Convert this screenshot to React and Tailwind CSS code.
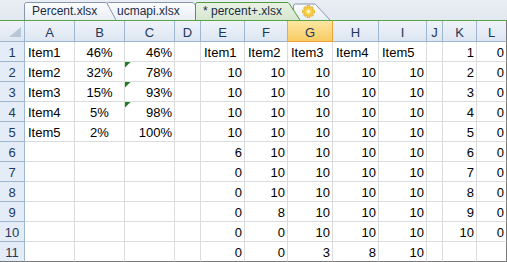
const data = [
  ["Item1", "46%", "46%", "", "Item1", "Item2", "Item3", "Item4", "Item5", "", "1", "0"],
  ["Item2", "32%", "78%", "", "10", "10", "10", "10", "10", "", "2", "0"],
  ["Item3", "15%", "93%", "", "10", "10", "10", "10", "10", "", "3", "0"],
  ["Item4", "5%", "98%", "", "10", "10", "10", "10", "10", "", "4", "0"],
  ["Item5", "2%", "100%", "", "10", "10", "10", "10", "10", "", "5", "0"],
  ["", "", "", "", "6", "10", "10", "10", "10", "", "6", "0"],
  ["", "", "", "", "0", "10", "10", "10", "10", "", "7", "0"],
  ["", "", "", "", "0", "10", "10", "10", "10", "", "8", "0"],
  ["", "", "", "", "0", "8", "10", "10", "10", "", "9", "0"],
  ["", "", "", "", "0", "0", "10", "10", "10", "", "10", "0"],
  ["", "", "", "", "0", "0", "3", "8", "10", "", "", ""],
];

const letters = ["A", "B", "C", "D", "E", "F", "G", "H", "I", "J", "K", "L"];
const gridCols =
  "grid grid-cols-[25px_50px_50px_50px_26px_44px_43px_45px_46px_48px_16px_34px_1fr]";

function Tab({ id, width, flat, top = 2.5, active, children, className, textClass }) {
  const fill = active ? ["#eaf2e6", "#d6e6cf"] : ["#fbfcfe", "#e9eef5"];
  const stroke = active ? "#4f9a3a" : "#8796ab";
  const outline = `M0.5 20 V${top + 2} Q0.5 ${top} 2.5 ${top} H${flat} Q${flat + 1.5} ${top} ${flat + 2.3} ${top + 1.3} L${width} 20`;
  return (
    <div className={className}>
      <svg className="absolute inset-0" width={width} height="20">
        <defs>
          <linearGradient id={id} x1="0" y1="0" x2="0" y2="1">
            <stop offset="0" stopColor={fill[0]} />
            <stop offset="1" stopColor={fill[1]} />
          </linearGradient>
        </defs>
        <path d={outline + " Z"} fill={`url(#${id})`} />
        <path d={outline} fill="none" stroke={stroke} strokeWidth="1" />
      </svg>
      <span className={textClass}>{children}</span>
    </div>
  );
}

// little yellow "new tab" gear
function NewTabIcon() {
  return (
    <svg width="13" height="13" viewBox="0 0 13 13" className="relative">
      <path
        d="M5 0.5 H8 V3 L10 1.5 L11.5 3 L10 5 H12.5 V8 H10 L11.5 10 L10 11.5 L8 10 V12.5 H5 V10 L3 11.5 L1.5 10 L3 8 H0.5 V5 H3 L1.5 3 L3 1.5 L5 3 Z"
        fill="#f6cf45"
        stroke="#e2a91f"
        strokeWidth="0.7"
        strokeLinejoin="round"
      />
      <circle cx="6.5" cy="6.5" r="2" fill="#fdf0b8" />
    </svg>
  );
}

function TabStrip() {
  return (
    <div className="bg-gradient-to-b from-[#e9eef4] to-[#e2e8f0] text-[#1b2c44]">
      <div className="flex h-[20px] items-end">
        <Tab
          id="t1"
          width={92}
          flat={81}
          className="relative z-20 ml-[24px] h-[20px] w-[92px] shrink-0"
          textClass="relative block pl-[8px] pt-px leading-[20px]"
        >
          Percent.xlsx
        </Tab>
        <Tab
          id="t2"
          width={99}
          flat={86}
          className="relative z-10 ml-[-10px] h-[20px] w-[99px] shrink-0"
          textClass="relative block pl-[11px] pt-px leading-[20px]"
        >
          ucmapi.xlsx
        </Tab>
        <Tab
          id="t3"
          width={105}
          flat={92}
          active
          className="relative z-30 ml-[-10px] h-[20px] w-[105px] shrink-0"
          textClass="relative block pl-[8px] pt-px leading-[20px]"
        >
          * percent+.xlsx
        </Tab>
        <Tab
          id="t4"
          width={37}
          flat={21}
          top={4}
          className="relative z-0 ml-[-7px] h-[20px] w-[37px] shrink-0"
          textClass="relative flex h-[20px] items-center pl-[9px] pt-[3px]"
        >
          <NewTabIcon />
        </Tab>
      </div>
      <div className="h-px bg-[#5ba445]" />
    </div>
  );
}

function HeaderRow() {
  return (
    <div className={gridCols}>
      <div className="relative h-[21px] border-r border-b border-[#9eb6ce] bg-gradient-to-b from-[#eef3f9] to-[#dde6f1]">
        <svg className="absolute left-[8px] top-[6px]" width="14" height="11">
          <path d="M13 0 V10 H1 Z" fill="#b8c7d8" />
        </svg>
      </div>
      {letters.map((l, i) => (
        <div
          key={l}
          className={
            l === "G"
              ? "h-[21px] border-r border-b border-r-[#efa23c] border-b-[#efa23c] bg-gradient-to-b from-[#fde7a0] to-[#f7cb62] text-center leading-[23px] text-[#1e395b]"
              : i === 11
              ? "h-[21px] border-r border-b border-r-[#7a7a7a] border-b-[#9eb6ce] bg-gradient-to-b from-[#eef3f9] to-[#dde6f1] text-center leading-[23px] text-[#1e395b]"
              : "h-[21px] border-r border-b border-[#9eb6ce] bg-gradient-to-b from-[#eef3f9] to-[#dde6f1] text-center leading-[23px] text-[#1e395b]"
          }
        >
          {l}
        </div>
      ))}
    </div>
  );
}

function Cell({ value, col, last, flag }) {
  let align = "text-right pr-[2px]";
  if (value.startsWith("Item")) align = "text-left pl-[3px]";
  else if (col === 1) align = "text-center";
  const border = last ? "border-b-[#7a7a7a]" : "border-b-[#dadcdd]";
  const right = col === 11 ? "border-r-[#7a7a7a]" : "border-r-[#dadcdd]";
  return (
    <div className={`relative h-[20px] overflow-hidden whitespace-nowrap border-r border-b leading-[21px] ${border} ${right} ${align}`}>
      {flag && (
        <svg className="absolute left-0 top-0" width="6" height="6">
          <path d="M0 0 H5.5 L0 5.5 Z" fill="#1f7d1f" />
        </svg>
      )}
      {value}
    </div>
  );
}

export default function App() {
  return (
    <div className="h-[262px] w-[507px] overflow-hidden bg-white font-['Liberation_Sans',Arial,sans-serif] text-[12px]">
      <TabStrip />
      <div className="text-[13px] text-black">
        <HeaderRow />
        {data.map((row, r) => (
          <div key={r} className={gridCols}>
            <div
              className={
                r === data.length - 1
                  ? "h-[20px] border-r border-b border-r-[#9eb6ce] border-b-[#7a7a7a] bg-[#e4ecf7] text-center leading-[21px] text-[#1e395b]"
                  : "h-[20px] border-r border-b border-[#9eb6ce] bg-[#e4ecf7] text-center leading-[21px] text-[#1e395b]"
              }
            >
              {r + 1}
            </div>
            {row.map((v, c) => (
              <Cell
                key={c}
                value={v}
                col={c}
                last={r === data.length - 1}
                flag={c === 2 && r >= 1 && r <= 3}
              />
            ))}
          </div>
        ))}
      </div>
    </div>
  );
}
